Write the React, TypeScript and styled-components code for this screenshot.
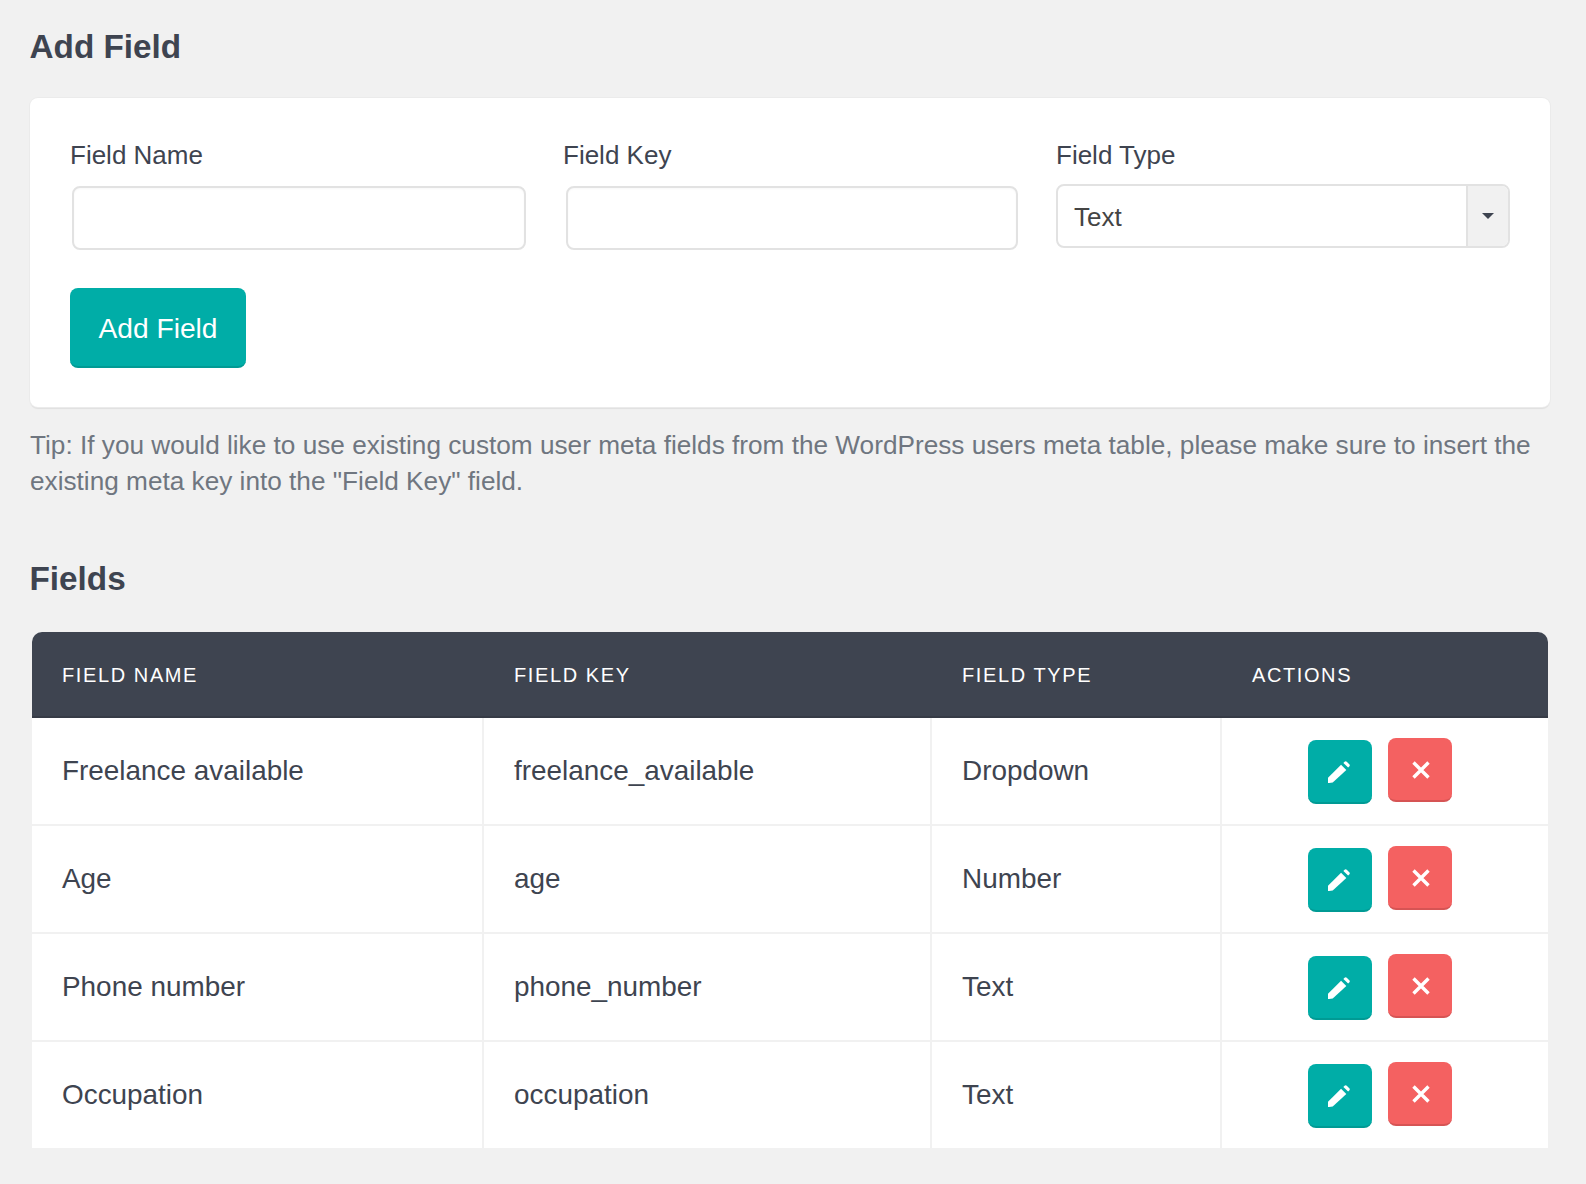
import styled, {createGlobalStyle} from 'styled-components';

const GlobalStyle = createGlobalStyle`
    html, body {
        margin: 0;
        padding: 0;
        background: #f1f1f1;
        font-family: "Liberation Sans", Arial, sans-serif;
        color: #3e4450;
    }
`;

const Page = styled.div`
    box-sizing: border-box;
    width: 1586px;
    height: 1184px;
    overflow: hidden;
    padding: 27px 36px 0 30px;
`;

const Heading = styled.h2`
    margin: 0 0 0 -0.5px;
    font-size: 33.3px;
    line-height: 40px;
    font-weight: 700;
    color: #3e4450;
`;

const Card = styled.div`
    box-sizing: border-box;
    height: 309px;
    margin-top: 31px;
    padding: 40px 39px 0 40px;
    background: #fff;
    border-radius: 8px;
    box-shadow: 0 0 0 1px #ebebeb, 0 2px 1px #dfdfdf;
`;

const FormRow = styled.div`
    display: grid;
    grid-template-columns: repeat(3, 454px);
    column-gap: 39px;
`;

const FieldBox = styled.div`
    display: flex;
    flex-direction: column;
`;

const Label = styled.label`
    font-size: 26px;
    line-height: 34px;
    color: #3e4450;
`;

const TextInput = styled.input<{$narrow?: boolean}>`
    box-sizing: border-box;
    width: ${(props) => (props.$narrow ? '452px' : '454px')};
    height: 64px;
    margin: 14px 0 0 ${(props) => (props.$narrow ? '3px' : '2px')};
    padding: 0 16px;
    background: #fff;
    border: 2px solid #e2e2e2;
    border-radius: 8px;
    outline: none;
    box-shadow: inset 0 1px 2px rgba(0, 0, 0, 0.03);
`;

const SelectBox = styled.div`
    box-sizing: border-box;
    display: flex;
    width: 454px;
    height: 64px;
    margin-top: 12px;
    border: 2px solid #e2e2e2;
    border-radius: 8px;
    overflow: hidden;
`;

const SelectValue = styled.div`
    flex: 1;
    padding-left: 16px;
    font-size: 26px;
    line-height: 62px;
    color: #444;
`;

const SelectArrow = styled.div`
    display: flex;
    align-items: center;
    justify-content: center;
    width: 40px;
    background: #f1f1f1;
    border-left: 2px solid #e2e2e2;
    &::after {
        content: '';
        border-top: 6px solid #3e4450;
        border-left: 6px solid transparent;
        border-right: 6px solid transparent;
    }
`;

const PrimaryButton = styled.button`
    display: block;
    box-sizing: border-box;
    width: 176px;
    height: 80px;
    margin-top: 38px;
    padding: 3px 0 0;
    font-family: inherit;
    font-size: 28.2px;
    color: #fff;
    background: #00ada7;
    border: none;
    border-bottom: 2px solid #009a94;
    border-radius: 8px;
`;

const Tip = styled.p`
    margin: 20px 0 0;
    font-size: 26.2px;
    line-height: 36px;
    color: #6f7680;
`;

const FieldsHeading = styled(Heading)`
    margin-top: 60px;
`;

const TableWrap = styled.div`
    width: 1516px;
    margin: 33px 0 0 2px;
    background: #fff;
    border-radius: 10px 10px 0 0;
    overflow: hidden;
`;

const Table = styled.table`
    width: 100%;
    table-layout: fixed;
    border-collapse: separate;
    border-spacing: 0;
`;

const HeadRow = styled.tr`
    height: 86px;
`;

const HeadCell = styled.th`
    box-sizing: border-box;
    padding: 2px 0 0 30px;
    font-size: 20px;
    font-weight: 400;
    letter-spacing: 1.6px;
    text-align: left;
    text-transform: uppercase;
    color: #fff;
    background: #3e4450;
    border-bottom: 2px solid #363b46;
`;

const Row = styled.tr`
    height: 108px;
    &:last-child {
        height: 106px;
    }
`;

const Cell = styled.td`
    box-sizing: border-box;
    padding: 0 0 0 30px;
    font-size: 27.9px;
    color: #3e4450;
    border-right: 2px solid #f1f1f1;
    border-bottom: 2px solid #f1f1f1;
    &:last-child {
        border-right: none;
    }
    tr:last-child > & {
        border-bottom: none;
    }
`;

const ActionCell = styled.div`
    display: flex;
    align-items: center;
    gap: 16px;
    padding: 0 0 2px 56px;
`;

const IconButton = styled.button<{$tone: 'edit' | 'delete'}>`
    display: flex;
    align-items: center;
    justify-content: center;
    box-sizing: border-box;
    width: 64px;
    height: 64px;
    margin-top: ${(props) => (props.$tone === 'edit' ? '3px' : '0')};
    margin-bottom: ${(props) => (props.$tone === 'edit' ? '0' : '1px')};
    padding: 0;
    background: ${(props) => (props.$tone === 'edit' ? '#00ada7' : '#f46161')};
    border: none;
    border-bottom: 2px solid ${(props) => (props.$tone === 'edit' ? '#009a94' : '#d65454')};
    border-radius: 8px;
`;

const EditGlyph = styled.svg`
    margin: 3px 2px 0 0;
`;

const CloseGlyph = styled.svg`
    margin: 2px 0 0 2px;
`;

const PencilIcon = () => (
    <EditGlyph width="22" height="22" viewBox="0 0 21 21" fill="#fff">
        <path d="M0 16 12.500 3.500l5 5L4.500 20.500 1 21H0z" />
        <path d="M14.700 1.800 15.800.7a1.500 1.500 0 0 1 2.100 0l2.400 2.400a1.500 1.500 0 0 1 0 2.100l-1.100 1.100z" />
    </EditGlyph>
);

const CloseIcon = () => (
    <CloseGlyph width="18" height="18" viewBox="0 0 18 18" stroke="#fff" strokeWidth="3.400" fill="none">
        <path d="M1.500 1.500 16.500 16.500M16.500 1.500 1.500 16.500" />
    </CloseGlyph>
);

const fields = [
    {name: 'Freelance available', key: 'freelance_available', type: 'Dropdown'},
    {name: 'Age', key: 'age', type: 'Number'},
    {name: 'Phone number', key: 'phone_number', type: 'Text'},
    {name: 'Occupation', key: 'occupation', type: 'Text'},
];

const App = () => {
    return (
        <Page>
            <GlobalStyle />
            <Heading>Add Field</Heading>
            <Card>
                <FormRow>
                    <FieldBox>
                        <Label>Field Name</Label>
                        <TextInput />
                    </FieldBox>
                    <FieldBox>
                        <Label>Field Key</Label>
                        <TextInput $narrow />
                    </FieldBox>
                    <FieldBox>
                        <Label>Field Type</Label>
                        <SelectBox>
                            <SelectValue>Text</SelectValue>
                            <SelectArrow />
                        </SelectBox>
                    </FieldBox>
                </FormRow>
                <PrimaryButton>Add Field</PrimaryButton>
            </Card>
            <Tip>
                Tip: If you would like to use existing custom user meta fields from the WordPress users meta table, please make sure to insert the existing meta key into the "Field Key" field.
            </Tip>
            <FieldsHeading>Fields</FieldsHeading>
            <TableWrap>
                <Table>
                    <colgroup>
                        <col style={{width: '452px'}} />
                        <col style={{width: '448px'}} />
                        <col style={{width: '290px'}} />
                        <col />
                    </colgroup>
                    <thead>
                        <HeadRow>
                            <HeadCell>Field Name</HeadCell>
                            <HeadCell>Field Key</HeadCell>
                            <HeadCell>Field Type</HeadCell>
                            <HeadCell>Actions</HeadCell>
                        </HeadRow>
                    </thead>
                    <tbody>
                        {fields.map((field) => (
                            <Row key={field.key}>
                                <Cell>{field.name}</Cell>
                                <Cell>{field.key}</Cell>
                                <Cell>{field.type}</Cell>
                                <Cell>
                                    <ActionCell>
                                        <IconButton $tone="edit">
                                            <PencilIcon />
                                        </IconButton>
                                        <IconButton $tone="delete">
                                            <CloseIcon />
                                        </IconButton>
                                    </ActionCell>
                                </Cell>
                            </Row>
                        ))}
                    </tbody>
                </Table>
            </TableWrap>
        </Page>
    );
};

export default App;
